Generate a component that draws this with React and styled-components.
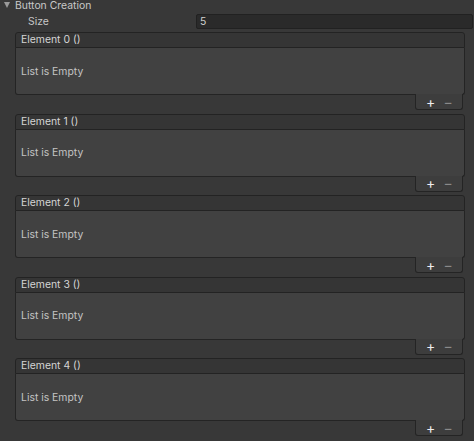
import styled, { createGlobalStyle } from "styled-components";

const Global = createGlobalStyle`
  html, body {
    margin: 0;
    padding: 0;
    background: #383838;
    overflow: hidden;
  }
  body {
    font-family: Inter, "Noto Sans", "Liberation Sans", sans-serif;
    font-size: 10.4px;
    color: #c8c8c8;
  }
`;

const Inspector = styled.div`
  width: 474px;
  height: 441px;
  background: #383838;
`;

const Foldout = styled.div`
  display: flex;
  align-items: center;
  height: 12px;
  margin-top: -1px;
  gap: 5px;
  padding-left: 4px;
`;

const Arrow = styled.span`
  width: 0;
  height: 0;
  border-left: 3.5px solid transparent;
  border-right: 3.5px solid transparent;
  border-top: 6px solid #9a9a9a;
`;

const FieldRow = styled.div`
  display: flex;
  align-items: center;
  height: 15px;
  margin-top: 3px;
  padding-left: 28px;
`;

const Label = styled.span`
  width: 168px;
`;

const NumberField = styled.div`
  flex: 1;
  height: 15px;
  margin-right: 1px;
  background: #2a2a2a;
  border: 1px solid #212121;
  border-radius: 2px;
  box-sizing: border-box;
  padding-left: 3px;
  line-height: 13px;
  color: #d2d2d2;
`;

const List = styled.div`
  display: flex;
  flex-direction: column;
  gap: 3.5px;
  margin-top: 3px;
  padding-left: 15px;
  padding-right: 9px;
`;

const Element = styled.div`
  display: flex;
  flex-direction: column;
`;

const Header = styled.div`
  height: 16px;
  box-sizing: border-box;
  background: #353535;
  border: 1px solid #232323;
  border-radius: 3px 3px 0 0;
  padding-left: 5px;
  line-height: 14px;
  color: #d4d4d4;
`;

const Body = styled.div`
  height: 47px;
  box-sizing: border-box;
  background: #414141;
  border: 1px solid #242424;
  border-top: none;
  border-radius: 0 0 3px 3px;
  padding-left: 5px;
  display: flex;
  align-items: center;
  color: #c4c4c4;
`;

const Footer = styled.div`
  align-self: flex-end;
  display: flex;
  align-items: center;
  justify-content: space-around;
  width: 48px;
  height: 16px;
  margin-top: -1px;
  margin-right: 2px;
  box-sizing: border-box;
  background: #3d3d3d;
  border: 1px solid #242424;
  border-top: none;
  border-radius: 0 0 3px 3px;
  padding: 0 5px 0 6px;
`;

const Button = styled.span`
  font-size: 14px;
  line-height: 14px;
  color: ${({ dim }) => (dim ? "#8a8a8a" : "#eeeeee")};
`;

const items = [0, 1, 2, 3, 4];

export default function App() {
  return (
    <>
      <Global />
      <Inspector>
        <Foldout>
          <Arrow />
          <span>Button Creation</span>
        </Foldout>
        <FieldRow>
          <Label>Size</Label>
          <NumberField>5</NumberField>
        </FieldRow>
        <List>
          {items.map((i) => (
            <Element key={i}>
              <Header>Element {i} ()</Header>
              <Body>List is Empty</Body>
              <Footer>
                <Button>+</Button>
                <Button dim>−</Button>
              </Footer>
            </Element>
          ))}
        </List>
      </Inspector>
    </>
  );
}
